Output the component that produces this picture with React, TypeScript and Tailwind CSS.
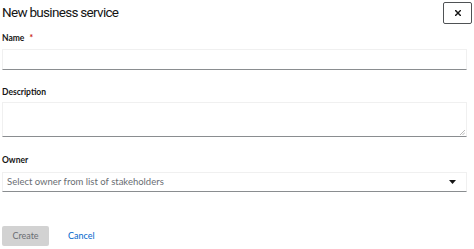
import React from "react";

export default function App() {
  return (
    <div className="w-[474px] h-[249px] bg-white px-[2px] pt-[2px] overflow-hidden" style={{ fontFamily: "Lato, 'Open Sans', sans-serif" }}>
      <div className="flex items-start justify-between h-[24px]">
        <h1 className="mt-[1px] text-[13.5px] leading-[18px] tracking-[-0.7px] text-[#151515]" style={{ fontFamily: "Roboto, sans-serif" }}>
          New business service
        </h1>
        <button className="w-[29px] h-[22px] rounded-[2px] border border-[#4f5255] flex items-center justify-center text-[#151515]">
          <svg width="6" height="6" viewBox="0 0 10 10">
            <path d="M1 1 L9 9 M9 1 L1 9" stroke="#151515" strokeWidth="2.4" strokeLinecap="square" />
          </svg>
        </button>
      </div>
      <div className="mr-[5px] flex flex-col">
        <label className="mt-[7px] h-[10px] text-[8.5px] leading-[10px] font-bold text-[#151515]">
          Name <span className="ml-[3px] text-[#c9190b]">*</span>
        </label>
        <div className="mt-[6px] h-[21px] border border-[#f0f0f0] border-b-[#8a8d90]" />
        <label className="mt-[17px] h-[10px] text-[8.5px] leading-[10px] font-bold text-[#151515]">Description</label>
        <div className="relative mt-[5px] h-[35px] border border-[#f0f0f0] border-b-[#8a8d90]">
          <svg className="absolute right-[1px] bottom-[1px]" width="5" height="5" viewBox="0 0 5 5">
            <path d="M5 0 L0 5 M5 2.5 L2.5 5" stroke="#9a9a9a" strokeWidth="0.7" />
          </svg>
        </div>
        <label className="mt-[18px] h-[10px] text-[8.5px] leading-[10px] font-bold text-[#151515]">Owner</label>
        <div className="mt-[7px] h-[20px] border border-[#f0f0f0] border-b-[#8a8d90] flex items-center justify-between pl-[4px] pr-[10px]">
          <span className="text-[9.5px] text-[#6a6e73]">Select owner from list of stakeholders</span>
          <svg width="7" height="4" viewBox="0 0 7 4">
            <path d="M0 0 L7 0 L3.5 4 Z" fill="#151515" />
          </svg>
        </div>
        <div className="mt-[34px] flex items-center gap-[19px]">
          <button className="w-[47px] h-[20px] rounded-[2px] bg-[#d2d2d2] text-[9px] text-[#6a6e73]">Create</button>
          <button className="text-[9px] text-[#0066cc]">Cancel</button>
        </div>
      </div>
    </div>
  );
}
